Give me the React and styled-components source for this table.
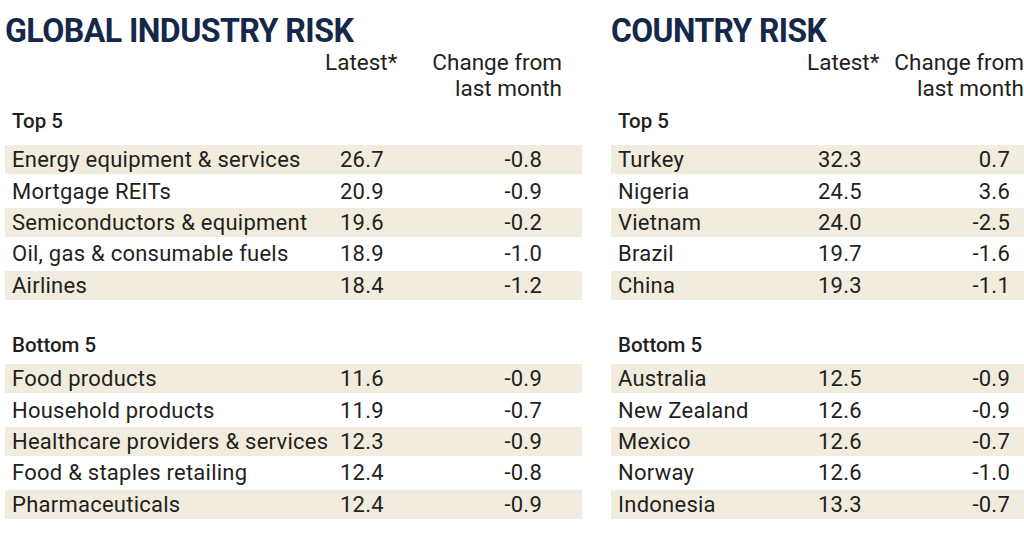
import React from 'react';
import styled, { createGlobalStyle } from 'styled-components';

const FONT = "Roboto, 'Liberation Sans', sans-serif";
const NAVY = '#16284a';
const INK = '#231f20';
const BAND = '#f1ecdd';

const Global = createGlobalStyle`
    html, body {
        margin: 0;
        padding: 0;
        background: #ffffff;
    }
    body {
        width: 1024px;
        height: 536px;
        overflow: hidden;
        font-family: ${FONT};
    }
`;

const Page = styled.div`
    display: flex;
    align-items: flex-start;
    width: 1024px;
    height: 536px;
    padding-top: 11px;
    box-sizing: border-box;
`;

const Panel = styled.section`
    width: ${({ $width }) => $width}px;
    margin-left: ${({ $left }) => $left}px;
    display: flex;
    flex-direction: column;
`;

const Title = styled.h1`
    margin: 0;
    font-family: ${FONT};
    font-weight: 700;
    font-size: 34px;
    line-height: 38px;
    height: 38px;
    color: ${NAVY};
    letter-spacing: -0.6px;
    white-space: nowrap;
    transform: scaleX(${({ $scale }) => $scale});
    transform-origin: left center;
`;

const HeadRow = styled.div`
    display: flex;
    justify-content: flex-end;
    align-items: flex-start;
    gap: ${({ $gap }) => $gap}px;
    padding-right: ${({ $pad }) => $pad}px;
    height: 52px;
`;

const HeadCell = styled.div`
    font-family: ${FONT};
    font-size: 22.5px;
    line-height: 26px;
    color: ${INK};
    text-align: right;
    white-space: nowrap;
`;

const GroupLabel = styled.div`
    font-family: ${FONT};
    font-weight: 500;
    font-size: 20.5px;
    line-height: 30px;
    color: ${INK};
    padding-left: 7px;
    padding-top: ${({ $top }) => $top}px;
    margin-bottom: ${({ $bottom }) => $bottom}px;
`;

const Row = styled.div`
    display: flex;
    align-items: center;
    height: 29.4px;
    margin-bottom: 2px;
    padding-left: 7px;
    background: ${({ $shaded }) => ($shaded ? BAND : 'transparent')};
    font-family: ${FONT};
    font-size: 22px;
    letter-spacing: 0.25px;
    color: ${INK};
    white-space: nowrap;
`;

const Name = styled.span`
    width: ${({ $width }) => $width}px;
    flex: none;
`;

const Latest = styled.span`
    width: ${({ $width }) => $width}px;
    flex: none;
`;

const Change = styled.span`
    width: ${({ $width }) => $width}px;
    flex: none;
    text-align: right;
`;

const industryTop = [
    ['Energy equipment & services', '26.7', '-0.8'],
    ['Mortgage REITs', '20.9', '-0.9'],
    ['Semiconductors & equipment', '19.6', '-0.2'],
    ['Oil, gas & consumable fuels', '18.9', '-1.0'],
    ['Airlines', '18.4', '-1.2'],
];

const industryBottom = [
    ['Food products', '11.6', '-0.9'],
    ['Household products', '11.9', '-0.7'],
    ['Healthcare providers & services', '12.3', '-0.9'],
    ['Food & staples retailing', '12.4', '-0.8'],
    ['Pharmaceuticals', '12.4', '-0.9'],
];

const countryTop = [
    ['Turkey', '32.3', '0.7'],
    ['Nigeria', '24.5', '3.6'],
    ['Vietnam', '24.0', '-2.5'],
    ['Brazil', '19.7', '-1.6'],
    ['China', '19.3', '-1.1'],
];

const countryBottom = [
    ['Australia', '12.5', '-0.9'],
    ['New Zealand', '12.6', '-0.9'],
    ['Mexico', '12.6', '-0.7'],
    ['Norway', '12.6', '-1.0'],
    ['Indonesia', '13.3', '-0.7'],
];

const Rows = ({ items, cols }) =>
    items.map(([name, latest, change], i) => (
        <Row key={name} $shaded={i % 2 === 0}>
            <Name $width={cols[0]}>{name}</Name>
            <Latest $width={cols[1]}>{latest}</Latest>
            <Change $width={cols[2]}>{change}</Change>
        </Row>
    ));

const RiskTable = ({ title, scale, left, width, head, cols, top, bottom }) => (
    <Panel $left={left} $width={width}>
        <Title $scale={scale}>{title}</Title>
        <HeadRow $gap={head.gap} $pad={head.pad}>
            <HeadCell>Latest*</HeadCell>
            <HeadCell>
                Change from
                <br />
                last month
            </HeadCell>
        </HeadRow>
        <GroupLabel $top={5} $bottom={9}>Top 5</GroupLabel>
        <Rows items={top} cols={cols} />
        <GroupLabel $top={28} $bottom={4}>Bottom 5</GroupLabel>
        <Rows items={bottom} cols={cols} />
    </Panel>
);

const App = () => (
    <>
        <Global />
        <Page>
            <RiskTable
                title="GLOBAL INDUSTRY RISK"
                scale={0.945}
                left={5}
                width={577}
                head={{ gap: 35, pad: 20 }}
                cols={[328, 82, 120]}
                top={industryTop}
                bottom={industryBottom}
            />
            <RiskTable
                title="COUNTRY RISK"
                scale={0.935}
                left={29}
                width={413}
                head={{ gap: 15, pad: 0 }}
                cols={[200, 72, 120]}
                top={countryTop}
                bottom={countryBottom}
            />
        </Page>
    </>
);

export default App;
